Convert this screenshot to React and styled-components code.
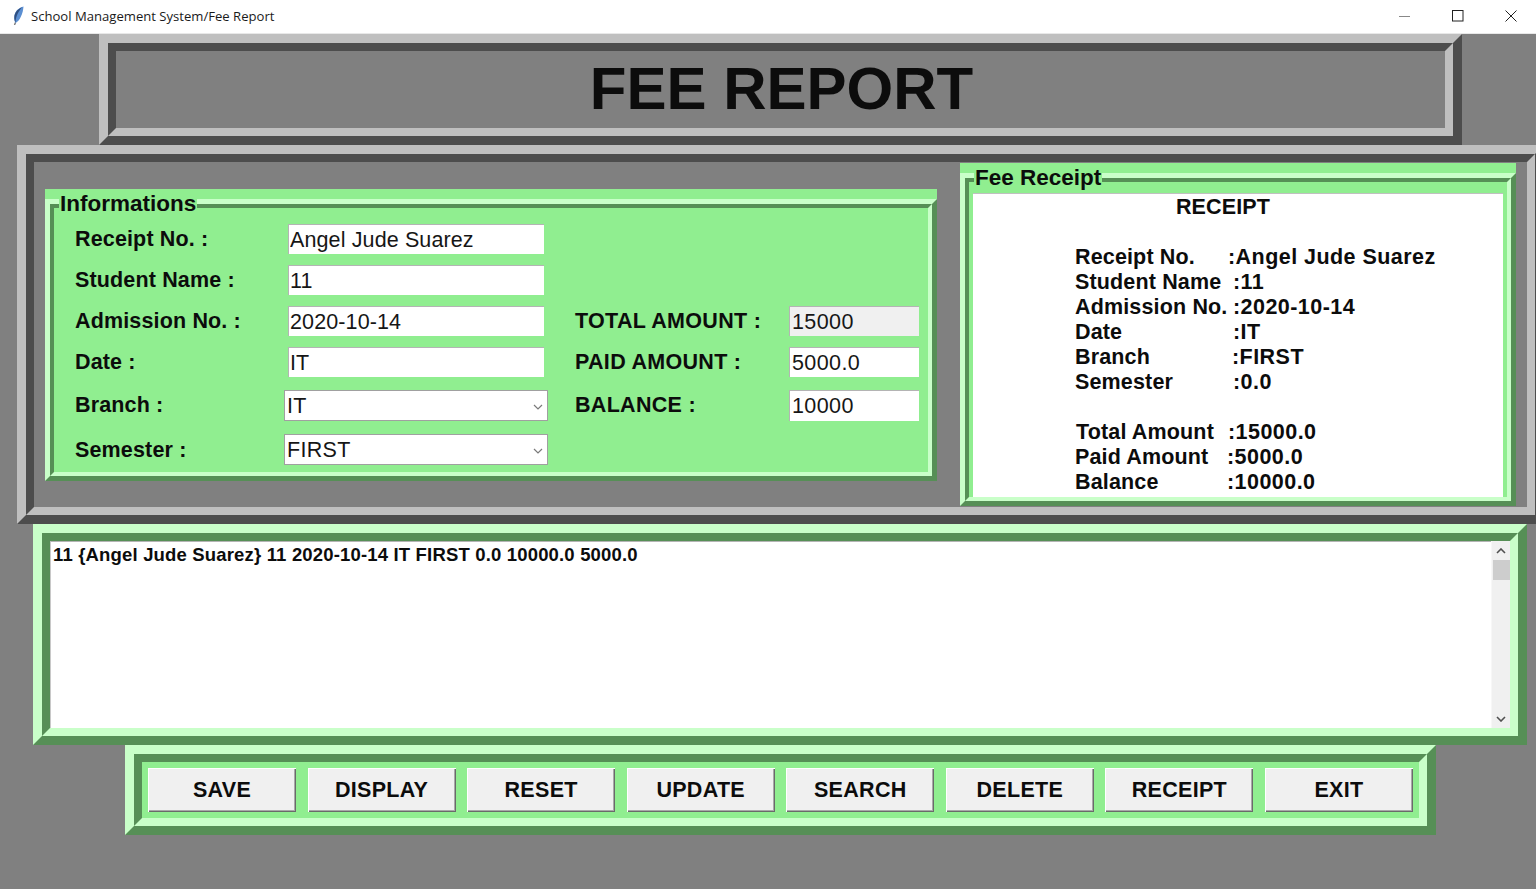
import React from "react";
import styled, { createGlobalStyle } from "styled-components";

const GRAY = { light: "#bfbfbf", dark: "#4d4d4d" };
const GREEN = { light: "#c9ffc9", dark: "#568f56" };
const FORM_BG = "#90ee90";

const GlobalStyle = createGlobalStyle`
  html, body {
    margin: 0;
    height: 100%;
    overflow: hidden;
    background: #808080;
  }
  * {
    box-sizing: border-box;
  }
`;

const Page = styled.div`
  width: 1536px;
  height: 889px;
  overflow: hidden;
  background: #808080;
  font-family: "Liberation Sans", Arial, sans-serif;
  color: #0c0c0c;
`;

const TitleBar = styled.div`
  height: 34px;
  background: #fff;
  display: flex;
  align-items: center;
  padding: 0 0 2px 13px;
  font-family: "Open Sans", sans-serif;
  font-size: 13.1px;
  color: #1a1a1a;
  border-bottom: 1px solid #e8e8e8;
`;

const Caption = styled.span`
  margin-left: 7px;
  flex: 1;
`;

const WinButtons = styled.div`
  display: flex;
  height: 100%;
  align-items: center;
  margin-right: -1px;
`;

const WinButton = styled.div`
  width: 53px;
  display: flex;
  justify-content: center;
`;

// tkinter style ridge: two nested bevels
const Ridge = styled.div`
  border-style: solid;
  border-width: ${(p) => p.$outer}px;
  border-color: ${(p) => `${p.$tone.light} ${p.$tone.dark} ${p.$tone.dark} ${p.$tone.light}`};
`;

const RidgeIn = styled.div`
  height: 100%;
  border-style: solid;
  border-width: ${(p) => p.$inner}px;
  border-color: ${(p) => `${p.$tone.dark} ${p.$tone.light} ${p.$tone.light} ${p.$tone.dark}`};
`;

const TitleFrame = styled(Ridge)`
  margin-left: 99px;
  width: 1363px;
  height: 111px;
`;

const Heading = styled(RidgeIn)`
  display: flex;
  align-items: center;
  justify-content: center;
  font-size: 60px;
  font-weight: bold;
  line-height: 1;
  padding: 0 0 2px 2px;
`;

const MainFrame = styled(Ridge)`
  margin-left: 17px;
  width: 1527px;
  height: 379px;
`;

const MainInner = styled(RidgeIn)`
  display: flex;
  align-items: flex-start;
  gap: 23px;
  padding: 1px 0 0 11px;
`;

const Group = styled.div`
  position: relative;
  flex: none;
  background: ${FORM_BG};
  padding-top: 10px;
  width: ${(p) => p.$width}px;
  height: ${(p) => p.$height}px;
  margin-top: ${(p) => p.$top || 0}px;
`;

const GroupRidge = styled(Ridge)`
  height: 100%;
`;

const Legend = styled.div`
  position: absolute;
  top: 1px;
  left: 14px;
  padding: 0 1px;
  background: ${FORM_BG};
  font-size: 22.5px;
  font-weight: bold;
  line-height: 28px;
`;

const FormGrid = styled(RidgeIn)`
  display: grid;
  grid-template-columns: 209px 264px 241px 130px;
  grid-template-rows: 41px 41px 41px 43px 44px 31px;
  padding: 16px 9px 7px 21px;
`;

const Label = styled.label`
  font-size: 21.5px;
  font-weight: bold;
  line-height: 30px;
  letter-spacing: ${(p) => (p.$right ? 0.3 : 0.15)}px;
  white-space: pre;
  margin-left: ${(p) => (p.$right ? 27 : 0)}px;
  padding-top: ${(p) => (p.$row === 6 ? 1 : 0)}px;
  grid-column: ${(p) => (p.$right ? 3 : 1)};
  grid-row: ${(p) => p.$row};
`;

const Field = styled.input`
  display: block;
  height: ${(p) => (p.$tall ? 31 : 30)}px;
  width: ${(p) => (p.$right ? 130 : 256)}px;
  margin-left: ${(p) => (p.$right ? 0 : 4)}px;
  grid-column: ${(p) => (p.$right ? 4 : 2)};
  grid-row: ${(p) => p.$row};
  padding: 1px 0 0 ${(p) => (p.$right ? 2 : 1)}px;
  border: none;
  border-top: 1px solid #b4b4b4;
  border-left: 1px solid #b4b4b4;
  border-radius: 0;
  outline: none;
  background: ${(p) => (p.$disabled ? "#f0f0f0" : "#fff")};
  color: #161616;
  font-family: "Liberation Sans", Arial, sans-serif;
  font-size: 21.5px;
  letter-spacing: ${(p) => (p.$right ? 0.4 : 0.12)}px;
`;

const Combo = styled.div`
  grid-column: 2;
  grid-row: ${(p) => p.$row};
  height: 31px;
  display: flex;
  align-items: center;
  justify-content: space-between;
  padding: 2px 4px 0 2px;
  background: #fff;
  border: 1px solid #a0a0a0;
  color: #161616;
  font-size: 21.5px;
  letter-spacing: 0.3px;
`;

const ReceiptBody = styled(RidgeIn)`
  padding: 11px 4px 0 4px;
`;

const ReceiptPaper = styled.div`
  height: 100%;
  background: #fff;
  border-top: 1px solid #c0c0c0;
  padding-top: 1px;
  font-size: 21.5px;
  font-weight: bold;
  line-height: 25px;
  letter-spacing: 0.15px;
`;

const ReceiptHead = styled.div`
  width: 500px;
  text-align: center;
  margin-bottom: 25px;
`;

const ReceiptRows = styled.div`
  padding-left: 102px;
`;

const ReceiptRow = styled.div`
  display: flex;
  min-height: 25px;
  margin-left: ${(p) => p.$nudge || 0}px;
`;

const RowName = styled.span`
  flex: none;
  width: ${(p) => p.$width}px;
`;

const RowValue = styled.span`
  letter-spacing: 0.45px;
`;

const LogFrame = styled(Ridge)`
  margin-left: 33px;
  width: 1494px;
  height: 221px;
`;

const LogInner = styled(RidgeIn)`
  display: flex;
`;

const LogText = styled.div`
  flex: 1;
  background: #fff;
  border-top: 1px solid #b4b4b4;
  border-left: 1px solid #c8c8c8;
  padding: 2px 0 0 2px;
  font-size: 18.5px;
  font-weight: bold;
  line-height: 21px;
  letter-spacing: 0.17px;
`;

const Scrollbar = styled.div`
  flex: none;
  width: 19px;
  display: flex;
  flex-direction: column;
  align-items: center;
  background: #f0f0f0;
  border-left: 1px solid #f7f7f7;
  padding-top: 1px;
`;

const ScrollArrow = styled.div`
  height: 18px;
  display: flex;
  align-items: center;
  justify-content: center;
  margin-top: ${(p) => (p.$end ? "auto" : 0)};
`;

const ScrollThumb = styled.div`
  width: 17px;
  height: 20px;
  background: #cdcdcd;
`;

const ButtonFrame = styled(Ridge)`
  margin-left: 125px;
  width: 1311px;
  height: 90px;
`;

const ButtonRow = styled(RidgeIn)`
  background: ${FORM_BG};
  display: flex;
  justify-content: space-between;
  padding: 6px;
`;

const ActionButton = styled.button`
  width: 148px;
  height: 44px;
  padding: 0;
  border: none;
  border-radius: 0;
  background: #f0f0f0;
  box-shadow: inset 1px 1px 0 #fff, inset -1px -1px 0 #6a6a6a, inset -2px -2px 0 #a8a8a8;
  color: #0c0c0c;
  font-family: "Liberation Sans", Arial, sans-serif;
  font-size: 21.5px;
  font-weight: bold;
  letter-spacing: 0.3px;
`;

const Feather = () => (
  <svg width="11" height="19" viewBox="0 0 11 19">
    <path d="M2.5 16.5 1.5 19" stroke="#777" strokeWidth="1.4" fill="none" />
    <path d="M10.5 0.5C6.5 1.5 2.5 4.5 1.5 9c-.5 2.5-.3 5.5 1 8C6.5 15 10 8 10.5 0.5z" fill="#5b8fd2" />
    <path d="M9 1.2C6 2.4 2.7 5 1.6 9c-.5 2.5-.3 5.5.9 8C2.6 12 4 7 9 1.2z" fill="#2f4f80" />
  </svg>
);

const Chevron = ({ up, color = "#7a7a7a", width = 1.2 }) => (
  <svg width="10" height="6" viewBox="0 0 10 6">
    <path d={up ? "M1 5 5 1l4 4" : "M1 1l4 4 4-4"} stroke={color} strokeWidth={width} fill="none" />
  </svg>
);

const rows = [
  ["Receipt No.", ":Angel Jude Suarez", 153],
  ["Student Name", ":11", 158],
  ["Admission No.", ":2020-10-14", 158],
  ["Date", ":IT", 158],
  ["Branch", ":FIRST", 157],
  ["Semester", ":0.0", 158],
  ["", "", 0],
  ["Total Amount", ":15000.0", 152, 1],
  ["Paid Amount", ":5000.0", 152],
  ["Balance", ":10000.0", 152],
];

const buttons = ["SAVE", "DISPLAY", "RESET", "UPDATE", "SEARCH", "DELETE", "RECEIPT", "EXIT"];

function App() {
  return (
    <Page>
      <GlobalStyle />
      <TitleBar>
        <Feather />
        <Caption>School Management System/Fee Report</Caption>
        <WinButtons>
          <WinButton>
            <svg width="12" height="12" viewBox="0 0 12 12">
              <path d="M0 6.5h11" stroke="#888" strokeWidth="1" />
            </svg>
          </WinButton>
          <WinButton>
            <svg width="12" height="12" viewBox="0 0 12 12">
              <rect x="0.5" y="0.5" width="10.5" height="10.5" stroke="#222" fill="none" />
            </svg>
          </WinButton>
          <WinButton>
            <svg width="12" height="12" viewBox="0 0 12 12">
              <path d="M0.5 0.5l11 11M11.5 0.5l-11 11" stroke="#222" strokeWidth="1" />
            </svg>
          </WinButton>
        </WinButtons>
      </TitleBar>

      <TitleFrame $outer={9} $tone={GRAY}>
        <Heading $inner={8} $tone={GRAY}>FEE REPORT</Heading>
      </TitleFrame>

      <MainFrame $outer={9} $tone={GRAY}>
        <MainInner $inner={8} $tone={GRAY}>
          <Group $width={892} $height={292} $top={26}>
            <Legend>Informations</Legend>
            <GroupRidge $outer={5} $tone={GREEN}>
              <FormGrid $inner={4} $tone={GREEN}>
                <Label $row={1}>Receipt No. :</Label>
                <Field $row={1} readOnly value="Angel Jude Suarez" />
                <Label $row={2}>Student Name :</Label>
                <Field $row={2} readOnly value="11" />
                <Label $row={3}>Admission No. :</Label>
                <Field $row={3} readOnly value="2020-10-14" />
                <Label $row={4}>Date :</Label>
                <Field $row={4} readOnly value="IT" />
                <Label $row={5}>Branch :</Label>
                <Combo $row={5}>IT<Chevron /></Combo>
                <Label $row={6}>Semester :</Label>
                <Combo $row={6}>FIRST<Chevron /></Combo>

                <Label $right $row={3}>TOTAL AMOUNT :</Label>
                <Field $right $disabled $row={3} readOnly value="15000" />
                <Label $right $row={4}>PAID AMOUNT :</Label>
                <Field $right $row={4} readOnly value="5000.0" />
                <Label $right $row={5}>BALANCE :</Label>
                <Field $right $tall $row={5} readOnly value="10000" />
              </FormGrid>
            </GroupRidge>
          </Group>

          <Group $width={556} $height={343}>
            <Legend>Fee Receipt</Legend>
            <GroupRidge $outer={5} $tone={GREEN}>
              <ReceiptBody $inner={4} $tone={GREEN}>
                <ReceiptPaper>
                  <ReceiptHead>RECEIPT</ReceiptHead>
                  <ReceiptRows>
                    {rows.map(([name, value, width, nudge], i) => (
                      <ReceiptRow key={i} $nudge={nudge}>
                        <RowName $width={width}>{name}</RowName>
                        <RowValue>{value}</RowValue>
                      </ReceiptRow>
                    ))}
                  </ReceiptRows>
                </ReceiptPaper>
              </ReceiptBody>
            </GroupRidge>
          </Group>
        </MainInner>
      </MainFrame>

      <LogFrame $outer={9} $tone={GREEN}>
        <LogInner $inner={8} $tone={GREEN}>
          <LogText>11 {"{Angel Jude Suarez}"} 11 2020-10-14 IT FIRST 0.0 10000.0 5000.0</LogText>
          <Scrollbar>
            <ScrollArrow><Chevron up color="#505050" width={1.6} /></ScrollArrow>
            <ScrollThumb />
            <ScrollArrow $end><Chevron color="#505050" width={1.6} /></ScrollArrow>
          </Scrollbar>
        </LogInner>
      </LogFrame>

      <ButtonFrame $outer={9} $tone={GREEN}>
        <ButtonRow $inner={8} $tone={GREEN}>
          {buttons.map((b) => (
            <ActionButton key={b}>{b}</ActionButton>
          ))}
        </ButtonRow>
      </ButtonFrame>
    </Page>
  );
}

export default App;
